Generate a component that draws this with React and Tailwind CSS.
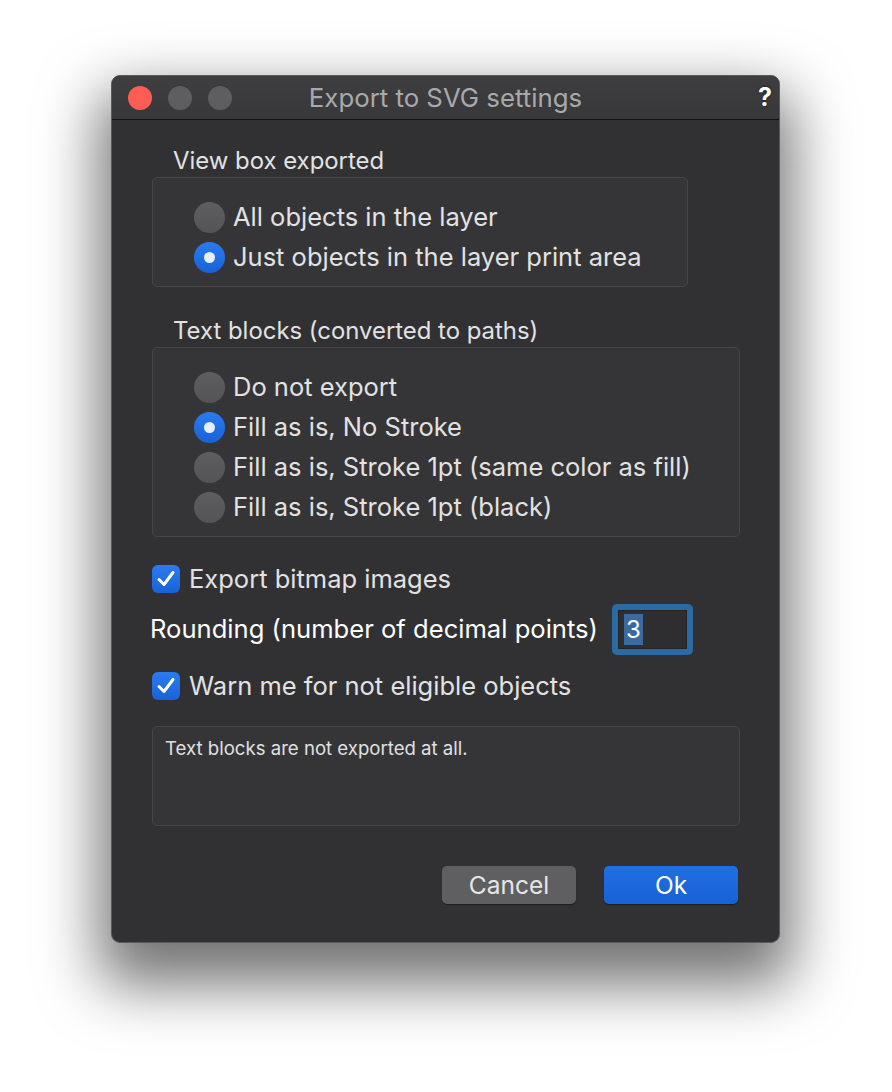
import React from 'react';

const font = { fontFamily: 'Inter, "Liberation Sans", Arial, sans-serif' };

const Radio = ({ checked, label }) => (
  <div className="flex items-center h-[40px] gap-[8px]">
    {checked ? (
      <span className="w-[31px] h-[31px] rounded-full bg-gradient-to-b from-[#2a7bf0] to-[#1762d6] flex items-center justify-center shrink-0">
        <span className="w-[11px] h-[11px] rounded-full bg-[#e6eefc]" />
      </span>
    ) : (
      <span className="w-[31px] h-[31px] rounded-full bg-gradient-to-b from-[#5e5e60] to-[#545456] shrink-0" />
    )}
    <span className="text-[25.5px] text-[#e2e2e2] leading-none">{label}</span>
  </div>
);

const Check = ({ label }) => (
  <div className="flex items-center h-[40px] gap-[9px]">
    <span className="w-[28px] h-[28px] rounded-[6px] bg-gradient-to-b from-[#2b7cf0] to-[#1763d6] flex items-center justify-center shrink-0">
      <svg width="22" height="22" viewBox="0 0 22 22" fill="none">
        <path d="M4 11.5 L9 16.5 L18 4.5" stroke="#ffffff" strokeWidth="3" strokeLinecap="round" strokeLinejoin="round" />
      </svg>
    </span>
    <span className="text-[25.5px] text-[#e2e2e2] leading-none">{label}</span>
  </div>
);

export default function App() {
  return (
    <div className="w-[892px] h-[1092px] bg-white pt-[75px] pl-[111px]" style={font}>
      <div className="w-[669px] h-[868px] rounded-[9px] bg-[#313133] border border-[#5a5a5c] shadow-[0_30px_60px_12px_rgba(0,0,0,0.55)] flex flex-col overflow-hidden">
        {/* title bar */}
        <div className="h-[44px] shrink-0 bg-gradient-to-b from-[#3e3e40] to-[#38383a] border-b border-[#111] grid grid-cols-[1fr_auto_1fr] items-center px-[16px]">
          <div className="flex gap-[16px]">
            <span className="w-[24px] h-[24px] rounded-full bg-[#fd5d55]" />
            <span className="w-[24px] h-[24px] rounded-full bg-[#5e5e60]" />
            <span className="w-[24px] h-[24px] rounded-full bg-[#5e5e60]" />
          </div>
          <div className="text-[25.8px] text-[#a9a9ab] leading-none">Export to SVG settings</div>
          <div className="flex justify-end">
            <span className="text-[25px] font-bold text-white leading-none -mr-[9px] [text-shadow:0_0_2px_#000]">?</span>
          </div>
        </div>

        {/* content */}
        <div className="flex flex-col pl-[40px] pr-[40px]">
          <div className="mt-[27px] ml-[21px] text-[23.9px] leading-[28px] text-[#e2e2e2]">View box exported</div>
          <div className="mt-[2px] w-[536px] h-[110px] rounded-[5px] bg-[#353537] border border-[#464648] pt-[19px] pl-[41px]">
            <Radio label="All objects in the layer" />
            <Radio checked label="Just objects in the layer print area" />
          </div>

          <div className="mt-[30px] ml-[21px] text-[23.9px] leading-[28px] text-[#e2e2e2]">Text blocks (converted to paths)</div>
          <div className="mt-[2px] w-[588px] h-[190px] rounded-[5px] bg-[#353537] border border-[#464648] pt-[19px] pl-[41px]">
            <Radio label="Do not export" />
            <Radio checked label="Fill as is, No Stroke" />
            <Radio label="Fill as is, Stroke 1pt (same color as fill)" />
            <Radio label="Fill as is, Stroke 1pt (black)" />
          </div>

          <div className="mt-[22px]">
            <Check label="Export bitmap images" />
          </div>

          <div className="mt-[5px] h-[50px] flex items-center -ml-[2px]">
            <span className="text-[25.6px] text-white leading-none">Rounding (number of decimal points)</span>
            <div className="ml-[14px] w-[81px] h-[51px] rounded-[5px] bg-[#2c6aa3] p-[6px]">
              <div className="w-full h-full bg-[#2e2e30] border border-[#232325] flex items-center pl-[5px]">
                <span className="bg-[#3b6aa0] text-white text-[24px] leading-[31px] px-[2px]">3</span>
              </div>
            </div>
          </div>

          <div className="mt-[12px]">
            <Check label="Warn me for not eligible objects" />
          </div>

          <div className="mt-[20px] w-[588px] h-[100px] rounded-[5px] bg-[#353537] border border-[#464648] px-[12px] pt-[8px]">
            <span className="text-[18.6px] text-[#e0e0e0]">Text blocks are not exported at all.</span>
          </div>

          <div className="mt-[40px] flex justify-end gap-[28px] pr-[1px]">
            <button className="w-[134px] h-[38px] rounded-[5px] bg-[#5f5f61] text-[24.5px] text-[#e6e6e6] shadow-[0_1px_1px_rgba(0,0,0,0.4)]">Cancel</button>
            <button className="w-[134px] h-[38px] rounded-[5px] bg-gradient-to-b from-[#1f6fe3] to-[#1862d5] text-[24.5px] text-white shadow-[0_1px_1px_rgba(0,0,0,0.4)]">Ok</button>
          </div>
        </div>
      </div>
    </div>
  );
}
